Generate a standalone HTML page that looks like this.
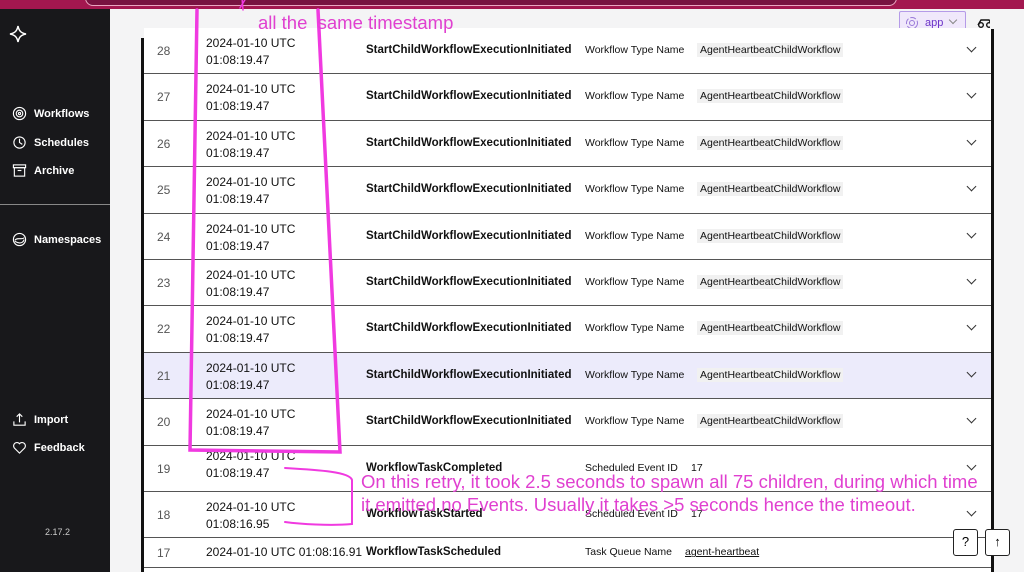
<!DOCTYPE html>
<html><head><meta charset="utf-8"><style>
*{margin:0;padding:0;box-sizing:border-box}
html,body{width:1024px;height:572px;overflow:hidden}
body{background:#f4f4f5;font-family:"Liberation Sans",sans-serif;position:relative}
.top{position:absolute;left:0;top:0;width:1024px;height:9px;background:#a3174f}
.top .in{position:absolute;left:85px;top:-6px;width:812px;height:12px;border:1px solid #e9a5c0;border-radius:0 0 8px 8px;background:#781240}
.side{position:absolute;left:0;top:9px;width:110px;height:563px;background:#18181b;color:#fff;font-size:11px;font-weight:bold}
.side .it{position:absolute;left:12px;display:flex;align-items:center;gap:7px}
.side .hr{position:absolute;left:0;top:195px;width:110px;height:1px;background:#888}
.tbl{position:absolute;left:141px;top:28px;width:853px;height:544px;background:#fff;border-left:3px solid #111;border-right:3px solid #111;overflow:hidden}
.row{position:absolute;left:0;width:847px;height:46.4px;border-bottom:1.5px solid #555;font-size:11.5px;color:#111}
.row .n{position:absolute;left:13px;color:#555;font-size:12px}
.row .d{position:absolute;left:62px;line-height:17px;font-size:12px}
.row .e{position:absolute;left:222px;font-weight:bold;font-size:11.5px}
.row .l{position:absolute;left:441px;font-size:10.5px}
.row .v{position:absolute;left:553px;font-size:10.5px;background:#f1f1f1;padding:1px 3px}
.row .c{position:absolute;left:824px;width:7px;height:7px;border-right:1px solid #333;border-bottom:1px solid #333;transform:rotate(45deg)}
.ann{position:absolute;color:#e040d0;font-size:18.5px;font-family:"Liberation Sans",sans-serif;white-space:nowrap}
.btn{position:absolute;top:529px;width:25px;height:27px;border:1.5px solid #222;border-radius:3px;background:#fff;font-size:13px;text-align:center;line-height:24px}
</style></head><body>
<div class="top"><div class="in"></div></div>
<div class="side">
<svg style="position:absolute;left:9px;top:16px" width="18" height="18" viewBox="0 0 18 18" fill="none" stroke="#fff" stroke-width="1.5"><path d="M9 1C10 6 12 8 17 9C12 10 10 12 9 17C8 12 6 10 1 9C6 8 8 6 9 1Z"/></svg>
<div class="it" style="top:97px"><svg width="15" height="15" viewBox="0 0 16 16" fill="none" stroke="#fff" stroke-width="1.2"><circle cx="8" cy="8" r="6.5"/><circle cx="8" cy="8" r="3.5"/><circle cx="8" cy="8" r="1.2"/></svg>Workflows</div>
<div class="it" style="top:126px"><svg width="15" height="15" viewBox="0 0 16 16" fill="none" stroke="#fff" stroke-width="1.2"><circle cx="8" cy="8" r="6"/><path d="M8 4v4l3 2"/></svg>Schedules</div>
<div class="it" style="top:154px"><svg width="15" height="15" viewBox="0 0 16 16" fill="none" stroke="#fff" stroke-width="1.2"><rect x="1.5" y="2" width="13" height="3"/><rect x="2.5" y="5" width="11" height="9"/><path d="M6 8h4"/></svg>Archive</div>
<div class="hr"></div>
<div class="it" style="top:223px"><svg width="15" height="15" viewBox="0 0 16 16" fill="none" stroke="#fff" stroke-width="1.2"><circle cx="8" cy="8" r="6.5"/><path d="M3 9c2-4 8 0 10-3M3 10c2 1 8 4 10-2"/></svg>Namespaces</div>
<div class="it" style="top:403px"><svg width="15" height="15" viewBox="0 0 16 16" fill="none" stroke="#fff" stroke-width="1.2"><path d="M2 10v4h12v-4M8 11V2M5 5l3-3 3 3"/></svg>Import</div>
<div class="it" style="top:431px"><svg width="15" height="15" viewBox="0 0 16 16" fill="none" stroke="#fff" stroke-width="1.2"><path d="M8 14L2.5 8.5A3 3 0 0 1 8 4a3 3 0 0 1 5.5 4.5Z"/></svg>Feedback</div>
<div style="position:absolute;left:45px;top:518px;font-size:9px;font-weight:normal;color:#ccc">2.17.2</div>
</div>
<div style="position:absolute;left:899px;top:11px;width:67px;height:25px;border:1px solid #b59be8;background:#f0e8fb;border-radius:2px"></div>
<div style="position:absolute;left:925px;top:17px;color:#6b32c8;font-size:11px;line-height:12px">app</div>
<div style="position:absolute;left:950px;top:17px;width:6px;height:6px;border-right:1px solid #888;border-bottom:1px solid #888;transform:rotate(45deg)"></div>
<svg style="position:absolute;left:905px;top:16px" width="14" height="14" viewBox="0 0 14 14" fill="none" stroke="#9a7ad8" stroke-width="1"><circle cx="7" cy="7" r="5.5" stroke-dasharray="6 2"/><circle cx="7" cy="7" r="2.5"/></svg>
<svg style="position:absolute;left:977px;top:18px" width="16" height="10" viewBox="0 0 16 10" fill="none" stroke="#111" stroke-width="1.4"><path d="M1 7L4 2h8l3 5"/><circle cx="4" cy="7" r="2.3"/><circle cx="12" cy="7" r="2.3"/></svg>
<div class="tbl">
<div class="row" style="top:0"><span class="n" style="top:16px">28</span><span class="d" style="top:7px">2024-01-10 UTC<br>01:08:19.47</span><span class="e" style="top:16px">StartChildWorkflowExecutionInitiated</span><span class="l" style="top:16px">Workflow Type Name</span><span class="v" style="top:15px">AgentHeartbeatChildWorkflow</span><i class="c" style="top:16px"></i></div>
<div class="row" style="top:46.4px"><span class="n" style="top:16px">27</span><span class="d" style="top:7px">2024-01-10 UTC<br>01:08:19.47</span><span class="e" style="top:16px">StartChildWorkflowExecutionInitiated</span><span class="l" style="top:16px">Workflow Type Name</span><span class="v" style="top:15px">AgentHeartbeatChildWorkflow</span><i class="c" style="top:16px"></i></div>
<div class="row" style="top:92.8px"><span class="n" style="top:16px">26</span><span class="d" style="top:7px">2024-01-10 UTC<br>01:08:19.47</span><span class="e" style="top:16px">StartChildWorkflowExecutionInitiated</span><span class="l" style="top:16px">Workflow Type Name</span><span class="v" style="top:15px">AgentHeartbeatChildWorkflow</span><i class="c" style="top:16px"></i></div>
<div class="row" style="top:139.2px"><span class="n" style="top:16px">25</span><span class="d" style="top:7px">2024-01-10 UTC<br>01:08:19.47</span><span class="e" style="top:16px">StartChildWorkflowExecutionInitiated</span><span class="l" style="top:16px">Workflow Type Name</span><span class="v" style="top:15px">AgentHeartbeatChildWorkflow</span><i class="c" style="top:16px"></i></div>
<div class="row" style="top:185.6px"><span class="n" style="top:16px">24</span><span class="d" style="top:7px">2024-01-10 UTC<br>01:08:19.47</span><span class="e" style="top:16px">StartChildWorkflowExecutionInitiated</span><span class="l" style="top:16px">Workflow Type Name</span><span class="v" style="top:15px">AgentHeartbeatChildWorkflow</span><i class="c" style="top:16px"></i></div>
<div class="row" style="top:232px"><span class="n" style="top:16px">23</span><span class="d" style="top:7px">2024-01-10 UTC<br>01:08:19.47</span><span class="e" style="top:16px">StartChildWorkflowExecutionInitiated</span><span class="l" style="top:16px">Workflow Type Name</span><span class="v" style="top:15px">AgentHeartbeatChildWorkflow</span><i class="c" style="top:16px"></i></div>
<div class="row" style="top:278.4px"><span class="n" style="top:16px">22</span><span class="d" style="top:7px">2024-01-10 UTC<br>01:08:19.47</span><span class="e" style="top:16px">StartChildWorkflowExecutionInitiated</span><span class="l" style="top:16px">Workflow Type Name</span><span class="v" style="top:15px">AgentHeartbeatChildWorkflow</span><i class="c" style="top:16px"></i></div>
<div class="row" style="top:324.8px;background:#ecebfb"><span class="n" style="top:16px">21</span><span class="d" style="top:7px">2024-01-10 UTC<br>01:08:19.47</span><span class="e" style="top:16px">StartChildWorkflowExecutionInitiated</span><span class="l" style="top:16px">Workflow Type Name</span><span class="v" style="top:15px">AgentHeartbeatChildWorkflow</span><i class="c" style="top:16px"></i></div>
<div class="row" style="top:371.2px"><span class="n" style="top:16px">20</span><span class="d" style="top:7px">2024-01-10 UTC<br>01:08:19.47</span><span class="e" style="top:16px">StartChildWorkflowExecutionInitiated</span><span class="l" style="top:16px">Workflow Type Name</span><span class="v" style="top:15px">AgentHeartbeatChildWorkflow</span><i class="c" style="top:16px"></i></div>
<div class="row" style="top:417.6px"><span class="n" style="top:16px">19</span><span class="d" style="top:2px">2024-01-10 UTC<br>01:08:19.47</span><span class="e" style="top:16px">WorkflowTaskCompleted</span><span class="l" style="top:16px">Scheduled Event ID</span><span class="l" style="top:16px;left:547px">17</span><i class="c" style="top:16px"></i></div>
<div class="row" style="top:464px"><span class="n" style="top:16px">18</span><span class="d" style="top:7px">2024-01-10 UTC<br>01:08:16.95</span><span class="e" style="top:16px">WorkflowTaskStarted</span><span class="l" style="top:16px">Scheduled Event ID</span><span class="l" style="top:16px;left:547px">17</span><i class="c" style="top:16px"></i></div>
<div class="row" style="top:510.4px;height:30px"><span class="n" style="top:8px">17</span><span class="d" style="top:6px">2024-01-10 UTC 01:08:16.91</span><span class="e" style="top:8px">WorkflowTaskScheduled</span><span class="l" style="top:8px">Task Queue Name</span><span class="l" style="top:8px;left:541px;text-decoration:underline">agent-heartbeat</span></div>
</div>
<div style="position:absolute;left:140px;top:9px;width:4px;height:29px;background:#f4f4f5"></div>
<div style="position:absolute;left:990px;top:9px;width:5px;height:20px;background:#f4f4f5"></div>
<svg style="position:absolute;left:0;top:0" width="1024" height="572" fill="none" stroke="#f03ae0" stroke-width="3.5" stroke-linecap="round">
<path d="M197 10 L190 450 L340 452 L318 10"/>
<path d="M243 10 L242 -2 M240 8 L246 -2" stroke-width="1.5"/>
<path d="M285 468 C320 470 350 472 352 480 L352 524 C330 526 300 524 285 522" stroke-width="2"/>
</svg>
<div class="ann" style="left:258px;top:12px">all the&nbsp; same timestamp</div>
<div class="ann" style="left:361px;top:470px;line-height:23px">On this retry, it took 2.5 seconds to spawn all 75 children, during which time<br>it emitted no Events. Usually it takes &gt;5 seconds hence the timeout.</div>
<div class="btn" style="left:953px">?</div>
<div class="btn" style="left:985px">↑</div>
</body></html>
